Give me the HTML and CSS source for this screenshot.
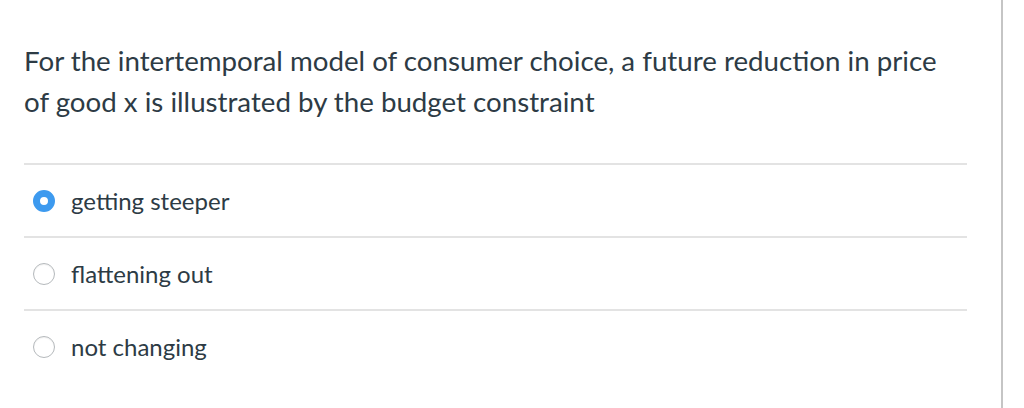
FILE: index.html
```html
<!DOCTYPE html>
<html>
<head>
<meta charset="utf-8">
<link rel="stylesheet" href="styles.css">
</head>
<body>
<div class="page">
  <div class="question">
    <p class="prompt">For the intertemporal model of consumer choice, a future reduction in price of good x is illustrated by the budget constraint</p>
    <div class="answers">
      <div class="answer">
        <span class="radio checked"></span>
        <span class="label">getting steeper</span>
      </div>
      <div class="answer">
        <span class="radio"></span>
        <span class="label">flattening out</span>
      </div>
      <div class="answer">
        <span class="radio"></span>
        <span class="label">not changing</span>
      </div>
    </div>
  </div>
  <div class="rule"></div>
</div>
</body>
</html>
```

FILE: styles.css
```css
html, body {
  margin: 0;
  padding: 0;
  background: #fff;
}
body {
  font-family: Lato, "Open Sans", sans-serif;
  color: #2d3b45;
}
.page {
  display: flex;
  height: 408px;
  overflow: hidden;
}
.question {
  width: 943px;
  margin-left: 24px;
}
.prompt {
  margin: 0;
  padding-top: 40px;
  font-size: 27.7px;
  line-height: 41px;
  width: 918px;
}
.answers {
  margin-top: 41px;
}
.answer {
  display: flex;
  align-items: center;
  height: 71px;
  border-top: 2px solid #e3e3e3;
}
.radio {
  box-sizing: border-box;
  width: 22px;
  height: 22px;
  border-radius: 50%;
  border: 1px solid #b5b9bc;
  box-shadow: inset 0 1px 1px rgba(0, 0, 0, 0.06);
  margin-left: 9px;
  margin-right: 16px;
  background: #fff;
}
.radio.checked {
  border: 7px solid #3d9aef;
  box-shadow: none;
  background: #fff;
}
.label {
  font-size: 24px;
}
.rule {
  width: 2px;
  margin-left: 34px;
  background: #c5c5c5;
  height: 100%;
}
```
